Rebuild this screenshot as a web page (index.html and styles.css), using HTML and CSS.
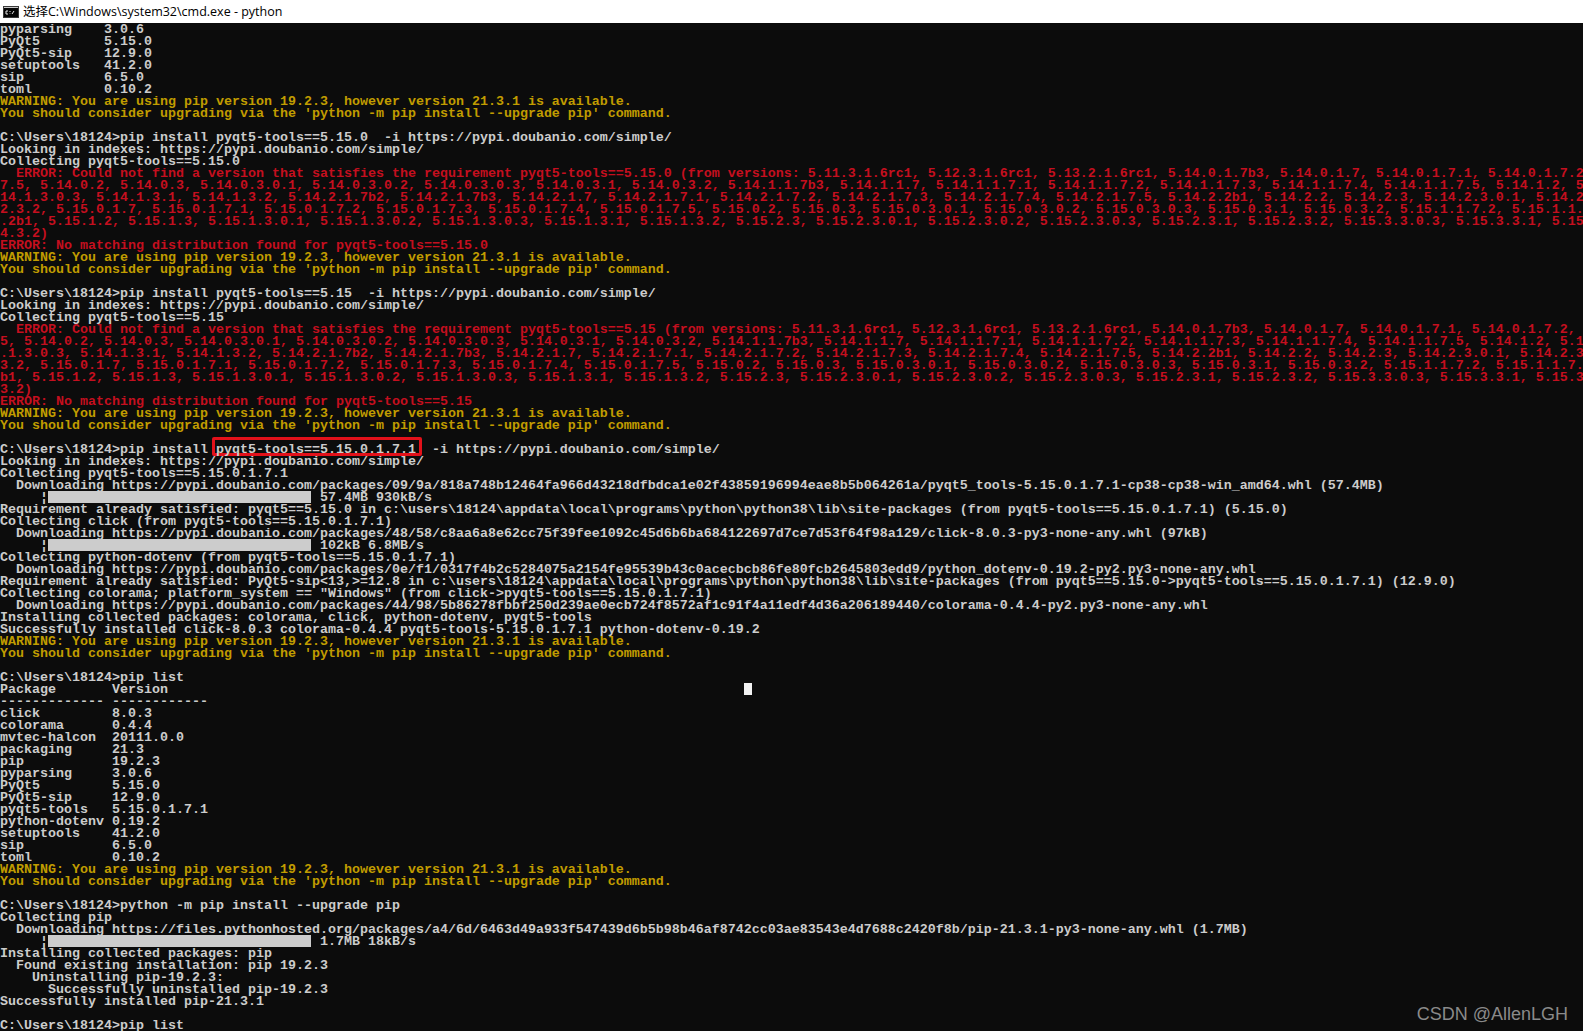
FILE: index.html
```html
<!DOCTYPE html>
<html lang="zh">
<head>
<meta charset="utf-8">
<title>cmd.exe - python</title>
<link rel="stylesheet" href="styles.css">
</head>
<body>
<div class="window">
<header class="titlebar">
<svg class="app-icon" width="16" height="16" viewBox="0 0 16 16" aria-hidden="true"><rect x="0" y="2" width="16" height="12" fill="#3a3a3a"/><rect x="1" y="3" width="14" height="1" fill="#c8c8c8"/><rect x="1" y="4" width="14" height="9" fill="#050505"/><path d="M3 7h2M3 7v3M3 10h2M7 7v1M7 9.5v.5M9 10l2-3" stroke="#e8e8e8" stroke-width="1" fill="none"/></svg>
<span class="title-text">选择C:\Windows\system32\cmd.exe - python</span>
</header>
<main class="console">
<pre class="output">pyparsing    3.0.6
PyQt5        5.15.0
PyQt5-sip    12.9.0
setuptools   41.2.0
sip          6.5.0
toml         0.10.2
<span class="warn">WARNING: You are using pip version 19.2.3, however version 21.3.1 is available.
You should consider upgrading via the 'python -m pip install --upgrade pip' command.</span>

C:\Users\18124&gt;pip install pyqt5-tools==5.15.0  -i https://pypi.doubanio.com/simple/
Looking in indexes: https://pypi.doubanio.com/simple/
Collecting pyqt5-tools==5.15.0
<span class="err">  ERROR: Could not find a version that satisfies the requirement pyqt5-tools==5.15.0 (from versions: 5.11.3.1.6rc1, 5.12.3.1.6rc1, 5.13.2.1.6rc1, 5.14.0.1.7b3, 5.14.0.1.7, 5.14.0.1.7.1, 5.14.0.1.7.2
7.5, 5.14.0.2, 5.14.0.3, 5.14.0.3.0.1, 5.14.0.3.0.2, 5.14.0.3.0.3, 5.14.0.3.1, 5.14.0.3.2, 5.14.1.1.7b3, 5.14.1.1.7, 5.14.1.1.7.1, 5.14.1.1.7.2, 5.14.1.1.7.3, 5.14.1.1.7.4, 5.14.1.1.7.5, 5.14.1.2, 5
14.1.3.0.3, 5.14.1.3.1, 5.14.1.3.2, 5.14.2.1.7b2, 5.14.2.1.7b3, 5.14.2.1.7, 5.14.2.1.7.1, 5.14.2.1.7.2, 5.14.2.1.7.3, 5.14.2.1.7.4, 5.14.2.1.7.5, 5.14.2.2b1, 5.14.2.2, 5.14.2.3, 5.14.2.3.0.1, 5.14.2
2.3.2, 5.15.0.1.7, 5.15.0.1.7.1, 5.15.0.1.7.2, 5.15.0.1.7.3, 5.15.0.1.7.4, 5.15.0.1.7.5, 5.15.0.2, 5.15.0.3, 5.15.0.3.0.1, 5.15.0.3.0.2, 5.15.0.3.0.3, 5.15.0.3.1, 5.15.0.3.2, 5.15.1.1.7.2, 5.15.1.1.
.2b1, 5.15.1.2, 5.15.1.3, 5.15.1.3.0.1, 5.15.1.3.0.2, 5.15.1.3.0.3, 5.15.1.3.1, 5.15.1.3.2, 5.15.2.3, 5.15.2.3.0.1, 5.15.2.3.0.2, 5.15.2.3.0.3, 5.15.2.3.1, 5.15.2.3.2, 5.15.3.3.0.3, 5.15.3.3.1, 5.15
4.3.2)
ERROR: No matching distribution found for pyqt5-tools==5.15.0</span>
<span class="warn">WARNING: You are using pip version 19.2.3, however version 21.3.1 is available.
You should consider upgrading via the 'python -m pip install --upgrade pip' command.</span>

C:\Users\18124&gt;pip install pyqt5-tools==5.15  -i https://pypi.doubanio.com/simple/
Looking in indexes: https://pypi.doubanio.com/simple/
Collecting pyqt5-tools==5.15
<span class="err">  ERROR: Could not find a version that satisfies the requirement pyqt5-tools==5.15 (from versions: 5.11.3.1.6rc1, 5.12.3.1.6rc1, 5.13.2.1.6rc1, 5.14.0.1.7b3, 5.14.0.1.7, 5.14.0.1.7.1, 5.14.0.1.7.2,
5, 5.14.0.2, 5.14.0.3, 5.14.0.3.0.1, 5.14.0.3.0.2, 5.14.0.3.0.3, 5.14.0.3.1, 5.14.0.3.2, 5.14.1.1.7b3, 5.14.1.1.7, 5.14.1.1.7.1, 5.14.1.1.7.2, 5.14.1.1.7.3, 5.14.1.1.7.4, 5.14.1.1.7.5, 5.14.1.2, 5.1
.1.3.0.3, 5.14.1.3.1, 5.14.1.3.2, 5.14.2.1.7b2, 5.14.2.1.7b3, 5.14.2.1.7, 5.14.2.1.7.1, 5.14.2.1.7.2, 5.14.2.1.7.3, 5.14.2.1.7.4, 5.14.2.1.7.5, 5.14.2.2b1, 5.14.2.2, 5.14.2.3, 5.14.2.3.0.1, 5.14.2.3
3.2, 5.15.0.1.7, 5.15.0.1.7.1, 5.15.0.1.7.2, 5.15.0.1.7.3, 5.15.0.1.7.4, 5.15.0.1.7.5, 5.15.0.2, 5.15.0.3, 5.15.0.3.0.1, 5.15.0.3.0.2, 5.15.0.3.0.3, 5.15.0.3.1, 5.15.0.3.2, 5.15.1.1.7.2, 5.15.1.1.7.
b1, 5.15.1.2, 5.15.1.3, 5.15.1.3.0.1, 5.15.1.3.0.2, 5.15.1.3.0.3, 5.15.1.3.1, 5.15.1.3.2, 5.15.2.3, 5.15.2.3.0.1, 5.15.2.3.0.2, 5.15.2.3.0.3, 5.15.2.3.1, 5.15.2.3.2, 5.15.3.3.0.3, 5.15.3.3.1, 5.15.3
3.2)
ERROR: No matching distribution found for pyqt5-tools==5.15</span>
<span class="warn">WARNING: You are using pip version 19.2.3, however version 21.3.1 is available.
You should consider upgrading via the 'python -m pip install --upgrade pip' command.</span>

C:\Users\18124&gt;pip install pyqt5-tools==5.15.0.1.7.1  -i https://pypi.doubanio.com/simple/
Looking in indexes: https://pypi.doubanio.com/simple/
Collecting pyqt5-tools==5.15.0.1.7.1
  Downloading https://pypi.doubanio.com/packages/09/9a/818a748b12464fa966d43218dfbdca1e02f43859196994eae8b5b064261a/pyqt5_tools-5.15.0.1.7.1-cp38-cp38-win_amd64.whl (57.4MB)
     ¦<span class="bar"></span> 57.4MB 930kB/s
Requirement already satisfied: pyqt5==5.15.0 in c:\users\18124\appdata\local\programs\python\python38\lib\site-packages (from pyqt5-tools==5.15.0.1.7.1) (5.15.0)
Collecting click (from pyqt5-tools==5.15.0.1.7.1)
  Downloading https://pypi.doubanio.com/packages/48/58/c8aa6a8e62cc75f39fee1092c45d6b6ba684122697d7ce7d53f64f98a129/click-8.0.3-py3-none-any.whl (97kB)
     ¦<span class="bar"></span> 102kB 6.8MB/s
Collecting python-dotenv (from pyqt5-tools==5.15.0.1.7.1)
  Downloading https://pypi.doubanio.com/packages/0e/f1/0317f4b2c5284075a2154fe95539b43c0acecbcb86fe80fcb2645803edd9/python_dotenv-0.19.2-py2.py3-none-any.whl
Requirement already satisfied: PyQt5-sip&lt;13,&gt;=12.8 in c:\users\18124\appdata\local\programs\python\python38\lib\site-packages (from pyqt5==5.15.0-&gt;pyqt5-tools==5.15.0.1.7.1) (12.9.0)
Collecting colorama; platform_system == "Windows" (from click-&gt;pyqt5-tools==5.15.0.1.7.1)
  Downloading https://pypi.doubanio.com/packages/44/98/5b86278fbbf250d239ae0ecb724f8572af1c91f4a11edf4d36a206189440/colorama-0.4.4-py2.py3-none-any.whl
Installing collected packages: colorama, click, python-dotenv, pyqt5-tools
Successfully installed click-8.0.3 colorama-0.4.4 pyqt5-tools-5.15.0.1.7.1 python-dotenv-0.19.2
<span class="warn">WARNING: You are using pip version 19.2.3, however version 21.3.1 is available.
You should consider upgrading via the 'python -m pip install --upgrade pip' command.</span>

C:\Users\18124&gt;pip list
Package       Version                                                                        <span class="cursor"></span>
------------- ------------
click         8.0.3
colorama      0.4.4
mvtec-halcon  20111.0.0
packaging     21.3
pip           19.2.3
pyparsing     3.0.6
PyQt5         5.15.0
PyQt5-sip     12.9.0
pyqt5-tools   5.15.0.1.7.1
python-dotenv 0.19.2
setuptools    41.2.0
sip           6.5.0
toml          0.10.2
<span class="warn">WARNING: You are using pip version 19.2.3, however version 21.3.1 is available.
You should consider upgrading via the 'python -m pip install --upgrade pip' command.</span>

C:\Users\18124&gt;python -m pip install --upgrade pip
Collecting pip
  Downloading https://files.pythonhosted.org/packages/a4/6d/6463d49a933f547439d6b5b98b46af8742cc03ae83543e4d7688c2420f8b/pip-21.3.1-py3-none-any.whl (1.7MB)
     ¦<span class="bar"></span> 1.7MB 18kB/s
Installing collected packages: pip
  Found existing installation: pip 19.2.3
    Uninstalling pip-19.2.3:
      Successfully uninstalled pip-19.2.3
Successfully installed pip-21.3.1

C:\Users\18124&gt;pip list</pre>
<div class="red-box"></div>
<div class="watermark">CSDN @AllenLGH</div>
</main>
</div>
</body>
</html>
```
FILE: styles.css
```css
html, body {
  margin: 0;
  height: 100%;
  overflow: hidden;
  background: #0c0c0c;
}
.window {
  display: flex;
  flex-direction: column;
  height: 1031px;
}
.titlebar {
  flex: 0 0 23px;
  display: flex;
  align-items: center;
  gap: 4px;
  padding-left: 3px;
  background: #fff;
  color: #000;
  font: 12.5px/23px "Open Sans", "Noto Sans CJK SC", sans-serif;
  white-space: nowrap;
}
.app-icon {
  flex: none;
}
.console {
  flex: 1;
  position: relative;
  overflow: hidden;
  background: #0c0c0c;
}
.output {
  position: relative;
  z-index: 1;
  margin: 0;
  padding-top: 1px;
  color: #cccccc;
  font: bold 13.3333px/12px "Liberation Mono", monospace;
  white-space: pre;
}
.warn { color: #c19c00; }
.err { color: #c50f1f; }
.bar {
  display: inline-block;
  width: 263px;
  height: 12px;
  margin: -1px 1px 0 0;
  vertical-align: top;
  background: #cccccc;
}
.cursor {
  display: inline-block;
  width: 8px;
  height: 12px;
  margin-top: -1px;
  vertical-align: top;
  background: #f2f2f2;
}
.red-box {
  position: absolute;
  left: 212px;
  top: 414px;
  width: 204px;
  height: 13px;
  border: 3px solid #e3111a;
  border-radius: 2px;
}
.watermark {
  position: absolute;
  right: 15px;
  bottom: 6px;
  color: #8a8a8a;
  font: 18px/22px "Liberation Sans", sans-serif;
  white-space: nowrap;
}
```
